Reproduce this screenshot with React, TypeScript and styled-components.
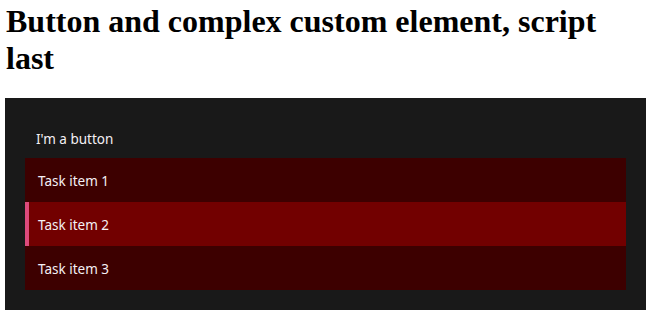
import React from "react";
import styled, { createGlobalStyle } from "styled-components";

const Global = createGlobalStyle`
  html, body { margin: 0; padding: 0; background: #ffffff; }
  body { padding: 3px 8px 0 5px; font-family: "Liberation Serif", "Times New Roman", serif; }
`;

const Title = styled.h1`
  margin: 0 0 21.44px 0;
  font-family: "Liberation Serif", "Times New Roman", serif;
  font-size: 32px;
  font-weight: bold;
  line-height: 36.8px;
  color: #000;
  padding-left: 1px;
`;

const Panel = styled.div`
  background: #191919;
  padding: 20px;
  display: flex;
  flex-direction: column;
  font-family: "Noto Sans", "Open Sans", sans-serif;
  font-size: 13.5px;
  color: #f4f0f4;
`;

const Button = styled.button`
  all: unset;
  display: flex;
  align-items: center;
  height: 40px;
  box-sizing: border-box;
  padding: 1px 11px 0;
  font: inherit;
  color: inherit;
  cursor: pointer;
`;

const List = styled.ul`
  list-style: none;
  margin: 0;
  padding: 0;
  display: flex;
  flex-direction: column;
`;

const Item = styled.li<{ $selected?: boolean }>`
  display: flex;
  align-items: center;
  height: 44px;
  box-sizing: border-box;
  padding-top: 2px;
  padding-left: ${(p) => (p.$selected ? "9px" : "13px")};
  background: ${(p) => (p.$selected ? "#720000" : "#3d0000")};
  border-left: ${(p) => (p.$selected ? "4px solid #dd4a7c" : "none")};
`;

const items = ["Task item 1", "Task item 2", "Task item 3"];

export default function App() {
  return (
    <>
      <Global />
      <Title>Button and complex custom element, script last</Title>
      <Panel>
        <Button>I'm a button</Button>
        <List>
          {items.map((t, i) => (
            <Item key={t} $selected={i === 1}>
              {t}
            </Item>
          ))}
        </List>
      </Panel>
    </>
  );
}
